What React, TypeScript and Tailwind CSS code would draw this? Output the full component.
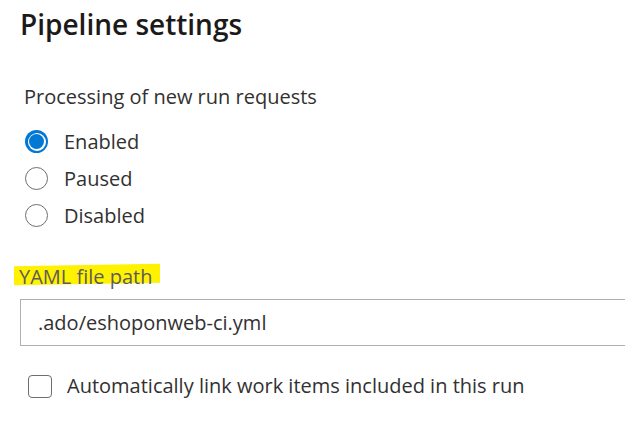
import React from "react";

function Radio({ checked, label }: { checked?: boolean; label: string }) {
  return (
    <div className="flex h-[37px] items-center">
      <div className="ml-[25px] flex h-[23px] w-[23px] items-center justify-center">
        {checked ? (
          <div className="flex h-[23px] w-[23px] items-center justify-center rounded-full bg-[#0078d4]">
            <div className="flex h-[18px] w-[18px] items-center justify-center rounded-full bg-white">
              <div className="h-[15px] w-[15px] rounded-full bg-[#0078d4]" />
            </div>
          </div>
        ) : (
          <div className="h-[23px] w-[23px] rounded-full border border-[#6e6e6e] bg-white" />
        )}
      </div>
      <span className="ml-[16px] text-[20px] leading-[28px] text-[#323130]">{label}</span>
    </div>
  );
}

export default function App() {
  return (
    <div
      className="h-[427px] w-[625px] overflow-hidden bg-white"
      style={{ fontFamily: '"Open Sans", "Noto Sans", sans-serif' }}
    >
      <div className="flex flex-col pt-[4px]">
        <h1 className="ml-[20px] text-[28px] font-semibold leading-[40px] text-[#1b1a19]">
          Pipeline settings
        </h1>
        <div className="ml-[24px] mt-[39px] text-[20px] leading-[28px] text-[#323130]">
          Processing of new run requests
        </div>
        <div className="mt-[12px] flex flex-col">
          <Radio checked label="Enabled" />
          <Radio label="Paused" />
          <Radio label="Disabled" />
        </div>
        <div className="relative ml-[14px] mt-[29px] h-[28px] w-[146px]">
          <div className="absolute left-0 top-[2px] h-[19px] w-[146px] -skew-y-1 bg-[#fff200]" />
          <span className="absolute left-[5px] top-0 whitespace-nowrap text-[20px] leading-[28px] text-[#5c5c5c]">
            YAML file path
          </span>
        </div>
        <div className="ml-[20px] mt-[8px] flex h-[47px] w-[640px] items-center border border-[#b0b0b0] pl-[17px]">
          <span className="text-[20px] leading-[28px] text-[#323130]">.ado/eshoponweb-ci.yml</span>
        </div>
        <div className="mt-[26px] flex h-[28px] items-center">
          <div className="ml-[28px] h-[23px] w-[24px] rounded-[4px] border border-[#6e6e6e] bg-white" />
          <span className="ml-[15px] text-[20px] leading-[28px] text-[#323130]">
            Automatically link work items included in this run
          </span>
        </div>
      </div>
    </div>
  );
}
